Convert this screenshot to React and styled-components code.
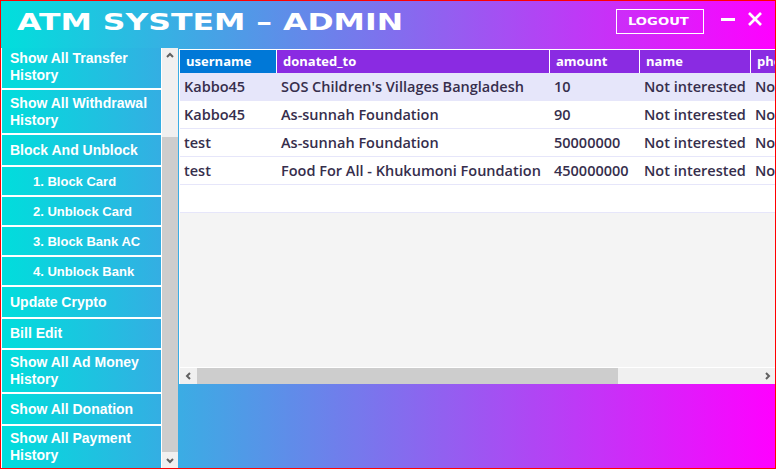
import React from 'react';
import styled, { createGlobalStyle } from 'styled-components';

const GlobalStyle = createGlobalStyle`
  html, body {
    margin: 0;
    padding: 0;
    background: #fff;
    overflow: hidden;
  }
  * {
    box-sizing: border-box;
  }
`;

const menu = [
  { label: 'Show All Transfer History', h: 43 },
  { label: 'Show All Withdrawal History', h: 43 },
  { label: 'Block And Unblock', h: 30 },
  { label: '1. Block Card', h: 28, sub: true },
  { label: '2. Unblock Card', h: 28, sub: true },
  { label: '3. Block Bank AC', h: 28, sub: true },
  { label: '4. Unblock Bank', h: 28, sub: true },
  { label: 'Update Crypto', h: 30 },
  { label: 'Bill Edit', h: 29 },
  { label: 'Show All Ad Money History', h: 42 },
  { label: 'Show All Donation', h: 30 },
  { label: 'Show All Payment History', h: 42 },
];

const columns = [
  { key: 'username', w: 97, active: true },
  { key: 'donated_to', w: 273 },
  { key: 'amount', w: 90 },
  { key: 'name', w: 111 },
  { key: 'phone', w: 130 },
];

const donations = [
  ['Kabbo45', "SOS Children's Villages Bangladesh", '10', 'Not interested', 'Not interested'],
  ['Kabbo45', 'As-sunnah Foundation', '90', 'Not interested', 'Not interested'],
  ['test', 'As-sunnah Foundation', '50000000', 'Not interested', 'Not interested'],
  ['test', 'Food For All - Khukumoni Foundation', '450000000', 'Not interested', 'Not interested'],
];

const Chevron = ({ dir }) => {
  const pts = {
    up: '2,6 5,3 8,6',
    down: '2,4 5,7 8,4',
    left: '6,2 3,5 6,8',
    right: '4,2 7,5 4,8',
  };
  return (
    <svg width='10' height='10' viewBox='0 0 10 10'>
      <polyline points={pts[dir]} fill='none' stroke='#606060' strokeWidth='2' />
    </svg>
  );
};

export default function App() {
  return (
    <>
      <GlobalStyle />
      <Window>
        <Header>
          <Title>ATM SYSTEM – ADMIN</Title>
          <Logout>
            <LogoutText>LOGOUT</LogoutText>
          </Logout>
          <WinIcon>
            <svg width='16' height='16' viewBox='0 0 16 16'>
              <line x1='1' y1='8.5' x2='15' y2='8.5' stroke='#fff' strokeWidth='3' />
            </svg>
          </WinIcon>
          <WinIcon>
            <svg width='16' height='16' viewBox='0 0 16 16'>
              <line x1='2' y1='2' x2='14' y2='14' stroke='#fff' strokeWidth='2.6' />
              <line x1='14' y1='2' x2='2' y2='14' stroke='#fff' strokeWidth='2.6' />
            </svg>
          </WinIcon>
        </Header>

        <Sidebar>
          <MenuList>
            {menu.map((m) => (
              <MenuButton key={m.label} $h={m.h} $sub={m.sub}>
                {m.label}
              </MenuButton>
            ))}
          </MenuList>
          <VScroll>
            <ScrollBtn><Chevron dir='up' /></ScrollBtn>
            <VTrack>
              <VThumb />
            </VTrack>
            <ScrollBtn><Chevron dir='down' /></ScrollBtn>
          </VScroll>
        </Sidebar>

        <Main>
          <Grid>
            <GridBody>
              <HeadRow>
                {columns.map((c) => (
                  <HeadCell key={c.key} $w={c.w} $active={c.active}>
                    {c.key}
                  </HeadCell>
                ))}
              </HeadRow>
              {donations.map((r, i) => (
                <Row key={i} $selected={i === 0}>
                  {r.map((v, j) => (
                    <Cell key={j} $w={columns[j].w}>{v}</Cell>
                  ))}
                </Row>
              ))}
              <Row />
            </GridBody>
            <HScroll>
              <ScrollBtn><Chevron dir='left' /></ScrollBtn>
              <HTrack>
                <HThumb />
              </HTrack>
              <ScrollBtn><Chevron dir='right' /></ScrollBtn>
            </HScroll>
          </Grid>
        </Main>
      </Window>
    </>
  );
}

const Window = styled.div`
  width: 776px;
  height: 469px;
  border: 1px solid #ff0000;
  background: linear-gradient(to right, #00e0dc, #ff00ff);
  display: grid;
  grid-template-columns: 177px 1fr;
  grid-template-rows: 47px 1fr;
  overflow: hidden;
`;

const Header = styled.header`
  grid-column: 1 / 3;
  display: flex;
  align-items: flex-start;
  padding: 8px 12px 0 16px;
  color: #fff;
`;

const Title = styled.h1`
  margin: 0;
  flex: 1;
  font-family: 'DejaVu Sans', sans-serif;
  font-weight: bold;
  font-size: 23px;
  line-height: 27px;
  white-space: nowrap;
  transform: scaleX(1.37);
  transform-origin: left center;
`;

const Logout = styled.button`
  width: 88px;
  height: 25px;
  margin-right: 16px;
  border: 1px solid #fff;
  background: transparent;
  color: #fff;
  display: flex;
  align-items: center;
  justify-content: center;
  padding: 0;
`;

const LogoutText = styled.span`
  font-family: 'DejaVu Sans', sans-serif;
  font-weight: bold;
  font-size: 11px;
  transform: scaleX(1.2);
  margin-left: -3px;
`;

const WinIcon = styled.span`
  width: 16px;
  height: 16px;
  margin-top: 2px;
  display: flex;
  & + & {
    margin-left: 11px;
  }
`;

const Sidebar = styled.aside`
  display: flex;
  background: #fff;
  overflow: hidden;
  min-height: 0;
`;

const MenuList = styled.nav`
  flex: 1;
  display: flex;
  flex-direction: column;
  justify-content: flex-end;
  gap: 2px;
  padding: 0 1px 0 1px;
  overflow: hidden;
`;

const MenuButton = styled.div`
  flex-shrink: 0;
  height: ${(p) => p.$h}px;
  display: flex;
  align-items: center;
  padding: 0 8px 0 ${(p) => (p.$sub ? 31 : 8)}px;
  background: linear-gradient(to right, #00dedc, #34aee3);
  color: #fff;
  font-family: 'Liberation Sans', Arial, sans-serif;
  font-weight: bold;
  font-size: ${(p) => (p.$sub ? 13 : 14)}px;
  line-height: 17px;
`;

const VScroll = styled.div`
  width: 16px;
  display: flex;
  flex-direction: column;
  background: #f0f0f0;
`;

const ScrollBtn = styled.div`
  width: 17px;
  height: 16px;
  flex-shrink: 0;
  display: flex;
  align-items: center;
  justify-content: center;
  background: #f0f0f0;
  ${VScroll} & {
    width: 16px;
  }
`;

const VTrack = styled.div`
  flex: 1;
  display: flex;
  flex-direction: column;
  justify-content: flex-end;
`;

const VThumb = styled.div`
  height: 315px;
  background: #cdcdcd;
`;

const Main = styled.main`
  padding: 1px 0 0 1px;
  min-width: 0;
  min-height: 0;
`;

const Grid = styled.section`
  height: 335px;
  display: flex;
  flex-direction: column;
  border-top: 1px solid #fff;
  border-left: 1px solid #fff;
  background: #f4f4f4;
  overflow: hidden;
`;

const GridBody = styled.div`
  flex: 1;
  overflow: hidden;
  font-family: 'Open Sans', 'Noto Sans', sans-serif;
`;

const HeadRow = styled.div`
  display: flex;
  height: 23px;
  width: max-content;
`;

const HeadCell = styled.div`
  flex-shrink: 0;
  width: ${(p) => p.$w}px;
  padding-left: 6px;
  background: ${(p) => (p.$active ? '#0078d7' : '#8a2be2')};
  border-right: 1px solid #fff;
  color: #fff;
  font-weight: 700;
  font-size: 13px;
  line-height: 23px;
  white-space: nowrap;
  overflow: hidden;
`;

const Row = styled.div`
  display: flex;
  height: 28px;
  width: 100%;
  min-width: max-content;
  background: ${(p) => (p.$selected ? '#e6e6fa' : '#fff')};
  border-bottom: 1px solid #e6e6fa;
`;

const Cell = styled.div`
  flex-shrink: 0;
  width: ${(p) => p.$w}px;
  padding-left: 4px;
  color: #362e4c;
  font-weight: 600;
  font-size: 14.5px;
  line-height: 27px;
  white-space: nowrap;
  overflow: hidden;
`;

const HScroll = styled.div`
  height: 16px;
  display: flex;
  background: #f0f0f0;
  border-top: 1px solid #fff;
  box-sizing: content-box;
`;

const HTrack = styled.div`
  flex: 1;
  display: flex;
`;

const HThumb = styled.div`
  width: 421px;
  background: #cdcdcd;
`;
